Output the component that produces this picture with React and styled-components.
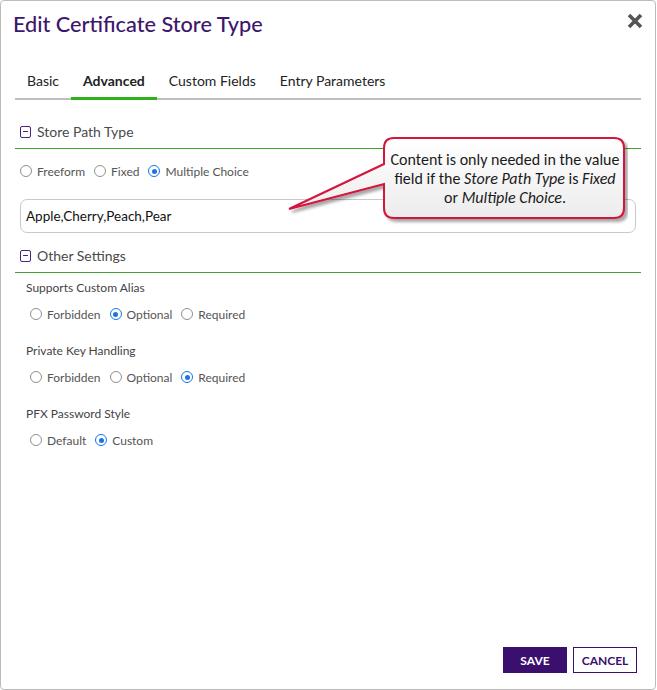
import React from 'react'
import styled, { createGlobalStyle } from 'styled-components'

const Global = createGlobalStyle`
  html, body { margin: 0; padding: 0; background: #fff; }
  body { font-family: Lato, "Noto Sans", sans-serif; }
`

const Dialog = styled.div`
  position: relative;
  box-sizing: border-box;
  width: 656px;
  height: 690px;
  border: 1px solid #bcbcbc;
  border-radius: 4px;
  display: flex;
  flex-direction: column;
  padding: 0 14px 0 14px;
`

const Header = styled.div`
  display: flex;
  align-items: center;
  justify-content: space-between;
  height: 46px;
  margin-left: -2px;
`

const Title = styled.h1`
  margin: 0;
  font-size: 21.7px;
  font-weight: 500;
  color: #3c176c;
`

const Close = styled.button`
  border: 0;
  background: none;
  padding: 0;
  width: 20px;
  height: 20px;
  margin-right: -4px;
  margin-top: -4px;
  cursor: pointer;
`

const Tabs = styled.div`
  display: flex;
  margin-top: 18px;
  border-bottom: 2px solid #bdbdbd;
  height: 33px;
`

const Tab = styled.div`
  padding: 0 12px;
  font-size: 14px;
  line-height: 32px;
  color: #222;
  font-weight: ${p => (p.$active ? 700 : 400)};
  border-bottom: 3px solid ${p => (p.$active ? '#2cb31a' : 'transparent')};
  margin-bottom: -2px;
`

const SectionHead = styled.div`
  display: flex;
  align-items: center;
  gap: 6px;
  padding-left: 5px;
  height: 33px;
  margin-top: ${p => p.$top || 0}px;
  border-bottom: 1px solid #3aa52a;
  font-size: 14px;
  color: #4a4a4a;
`

const Minus = styled.span`
  box-sizing: border-box;
  width: 11px;
  height: 12px;
  border: 1px solid #4b237d;
  border-radius: 2px;
  display: inline-flex;
  align-items: center;
  justify-content: center;
  &::after {
    content: '';
    width: 5px;
    height: 1px;
    background: #4b237d;
  }
`

const RadioRow = styled.div`
  display: flex;
  align-items: center;
  gap: 9px;
  padding-left: ${p => p.$indent || 5}px;
  height: 20px;
  margin-top: ${p => p.$top || 0}px;
`

const Option = styled.label`
  display: flex;
  align-items: center;
  gap: 5px;
  font-size: 12px;
  color: #555;
`

const Circle = styled.span`
  box-sizing: border-box;
  width: 12px;
  height: 12px;
  border-radius: 50%;
  border: ${p => (p.$on ? '1.5px solid #1a73e8' : '1.5px solid #8f8f8f')};
  display: inline-flex;
  align-items: center;
  justify-content: center;
  &::after {
    content: '';
    display: ${p => (p.$on ? 'block' : 'none')};
    width: 5px;
    height: 5px;
    border-radius: 50%;
    background: #1a73e8;
  }
`

const ValueBox = styled.div`
  box-sizing: border-box;
  margin: 18px 5px 0 5px;
  height: 34px;
  border: 1px solid #c8c8c8;
  border-radius: 7px;
  display: flex;
  align-items: center;
  padding-left: 5px;
  font-size: 13.5px;
  color: #111;
`

const FieldLabel = styled.div`
  font-size: 12px;
  color: #444;
  padding-left: 11px;
  margin-top: ${p => p.$top || 0}px;
  line-height: 14px;
`

const Footer = styled.div`
  margin-top: auto;
  display: flex;
  justify-content: flex-end;
  gap: 6px;
  padding: 0 4px 16px 0;
`

const Button = styled.button`
  box-sizing: border-box;
  width: 64px;
  height: 26px;
  font-family: Lato, "Noto Sans", sans-serif;
  font-size: 12px;
  font-weight: 700;
  border: 1px solid #3b0f6e;
  background: ${p => (p.$primary ? '#3b0f6e' : '#fff')};
  color: ${p => (p.$primary ? '#fff' : '#3b0f6e')};
  cursor: pointer;
  padding: 0;
`

const Callout = styled.div`
  position: absolute;
  left: 287px;
  top: 136px;
  width: 340px;
  height: 90px;
  pointer-events: none;
`

const CalloutText = styled.div`
  position: absolute;
  left: 97px;
  top: 0;
  width: 240px;
  height: 82px;
  display: flex;
  align-items: center;
  justify-content: center;
  text-align: center;
  font-family: Carlito, Lato, "Noto Sans", sans-serif;
  font-size: 16px;
  font-weight: 400;
  line-height: 19px;
  color: #1a1a1a;
  box-sizing: border-box;
  white-space: nowrap;
  i { font-style: italic; }
`

function Radio({ label, on }) {
  return (
    <Option>
      <Circle $on={on} />
      {label}
    </Option>
  )
}

function App() {
  return (
    <>
      <Global />
      <Dialog>
        <Header>
          <Title>Edit Certificate Store Type</Title>
          <Close aria-label="close">
            <svg width="18" height="18" viewBox="0 0 18 18">
              <path d="M3 3 L15 15 M15 3 L3 15" stroke="#555" strokeWidth="3.6" strokeLinecap="butt" />
            </svg>
          </Close>
        </Header>
        <Tabs>
          <Tab>Basic</Tab>
          <Tab $active>Advanced</Tab>
          <Tab>Custom Fields</Tab>
          <Tab>Entry Parameters</Tab>
        </Tabs>

        <SectionHead $top={15}>
          <Minus />
          Store Path Type
        </SectionHead>
        <RadioRow $top={12}>
          <Radio label="Freeform" />
          <Radio label="Fixed" />
          <Radio label="Multiple Choice" on />
        </RadioRow>
        <ValueBox>Apple,Cherry,Peach,Pear</ValueBox>

        <SectionHead $top={6}>
          <Minus />
          Other Settings
        </SectionHead>
        <FieldLabel $top={8}>Supports Custom Alias</FieldLabel>
        <RadioRow $indent={15} $top={9}>
          <Radio label="Forbidden" />
          <Radio label="Optional" on />
          <Radio label="Required" />
        </RadioRow>
        <FieldLabel $top={20}>Private Key Handling</FieldLabel>
        <RadioRow $indent={15} $top={9}>
          <Radio label="Forbidden" />
          <Radio label="Optional" />
          <Radio label="Required" on />
        </RadioRow>
        <FieldLabel $top={20}>PFX Password Style</FieldLabel>
        <RadioRow $indent={15} $top={9}>
          <Radio label="Default" />
          <Radio label="Custom" on />
        </RadioRow>

        <Footer>
          <Button $primary>SAVE</Button>
          <Button>CANCEL</Button>
        </Footer>

        <Callout>
          <svg width="340" height="90" viewBox="0 0 340 90" style={{ position: 'absolute', left: 0, top: 0 }}>
            <defs>
              <linearGradient id="cg" x1="0" y1="0" x2="0" y2="1">
                <stop offset="0" stopColor="#ffffff" />
                <stop offset="1" stopColor="#ececec" />
              </linearGradient>
              <filter id="sh" x="-10%" y="-10%" width="130%" height="130%">
                <feGaussianBlur in="SourceAlpha" stdDeviation="1.5" />
                <feOffset dx="3" dy="3" />
                <feComponentTransfer><feFuncA type="linear" slope="0.35" /></feComponentTransfer>
                <feMerge><feMergeNode /><feMergeNode in="SourceGraphic" /></feMerge>
              </filter>
            </defs>
            <path
              filter="url(#sh)"
              d="M106 1 H326 Q336 1 336 11 V71 Q336 81 326 81 H106 Q96 81 96 71 V47 L1 72 L96 27 V11 Q96 1 106 1 Z"
              fill="url(#cg)"
              stroke="#d4133c"
              strokeWidth="2"
              strokeLinejoin="miter"
            />
          </svg>
          <CalloutText>
            <span>
              Content is only needed in the value
              <br />
              field if the <i>Store Path Type</i> is <i>Fixed</i>
              <br />
              or <i>Multiple Choice</i>.
            </span>
          </CalloutText>
        </Callout>
      </Dialog>
    </>
  )
}

export default App
